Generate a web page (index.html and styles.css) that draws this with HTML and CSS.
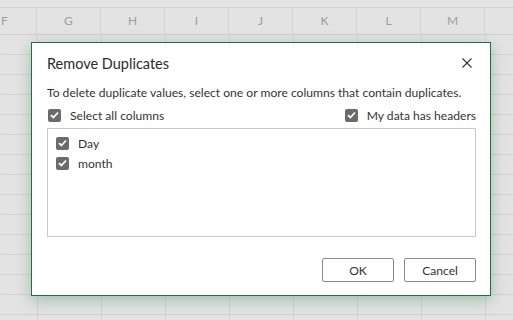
FILE: index.html
```html
<!DOCTYPE html>
<html>
<head>
<meta charset="utf-8">
<link rel="stylesheet" href="styles.css">
</head>
<body>
<div class="sheet">
  <div class="topbar"></div>
  <div class="colheads">
    <div class="col">F</div><div class="col">G</div><div class="col">H</div><div class="col">I</div><div class="col">J</div><div class="col">K</div><div class="col">L</div><div class="col">M</div><div class="col"></div>
  </div>
  <div class="rows"></div>
</div>
<div class="dialog">
  <div class="head">
    <div class="title">Remove Duplicates</div>
    <svg class="close" width="10" height="10" viewBox="0 0 10 10"><path d="M0.5 0.5 L9.5 9.5 M9.5 0.5 L0.5 9.5" stroke="#333" stroke-width="1.1" fill="none"/></svg>
  </div>
  <div class="desc">To delete duplicate values, select one or more columns that contain duplicates.</div>
  <div class="opts">
    <label class="cb"><span class="box"><svg width="9" height="8" viewBox="0 0 9 8"><path d="M1 4.2 L3.4 6.5 L8 1.5" stroke="#fff" stroke-width="1.8" fill="none"/></svg></span>Select all columns</label>
    <label class="cb"><span class="box"><svg width="9" height="8" viewBox="0 0 9 8"><path d="M1 4.2 L3.4 6.5 L8 1.5" stroke="#fff" stroke-width="1.8" fill="none"/></svg></span>My data has headers</label>
  </div>
  <div class="list">
    <label class="cb item"><span class="box"><svg width="9" height="8" viewBox="0 0 9 8"><path d="M1 4.2 L3.4 6.5 L8 1.5" stroke="#fff" stroke-width="1.8" fill="none"/></svg></span>Day</label>
    <label class="cb item"><span class="box"><svg width="9" height="8" viewBox="0 0 9 8"><path d="M1 4.2 L3.4 6.5 L8 1.5" stroke="#fff" stroke-width="1.8" fill="none"/></svg></span>month</label>
  </div>
  <div class="buttons">
    <button class="btn">OK</button>
    <button class="btn">Cancel</button>
  </div>
</div>
</body>
</html>
```

FILE: styles.css
```css
html, body {
  margin: 0;
  padding: 0;
  width: 513px;
  height: 320px;
  overflow: hidden;
  background: #e3e3e3;
  font-family: Lato, "Noto Sans", sans-serif;
}
.sheet {
  width: 513px;
  height: 320px;
  overflow: hidden;
}
.topbar {
  height: 8px;
  border-bottom: 1px solid #d4d4d4;
  box-sizing: border-box;
}
.colheads {
  display: flex;
  height: 27px;
  margin-left: -27px;
  border-bottom: 1px solid #cfcfcf;
  box-sizing: border-box;
}
.col {
  flex: 0 0 64px;
  box-sizing: border-box;
  border-right: 1px solid #d4d4d4;
  text-align: center;
  line-height: 26px;
  font-size: 12px;
  color: #9d9d9d;
}
.rows {
  height: 285px;
  background-image:
    repeating-linear-gradient(to right, transparent 0, transparent 63px, #d2d2d2 63px, #d2d2d2 64px),
    repeating-linear-gradient(to bottom, transparent 0, transparent 19px, #d2d2d2 19px, #d2d2d2 20px);
  background-position: -26px 0, 0 0;
}
.dialog {
  position: absolute;
  left: 31px;
  top: 42px;
  width: 460px;
  height: 254px;
  box-sizing: border-box;
  background: #fff;
  border: 1px solid #1e7145;
  box-shadow: 0 4px 14px rgba(40, 120, 70, 0.35);
  padding: 0 14px 0 15px;
  display: flex;
  flex-direction: column;
  color: #262626;
}
.head {
  display: flex;
  justify-content: space-between;
  align-items: center;
  height: 40px;
}
.title {
  font-size: 14.5px;
  color: #2b2b2b;
}
.close {
  margin-right: 4px;
}
.desc {
  font-size: 12.1px;
  color: #333;
  height: 20px;
  line-height: 20px;
  white-space: nowrap;
}
.opts {
  display: flex;
  justify-content: space-between;
  height: 24px;
  align-items: center;
  padding-left: 1px;
}
.cb {
  display: flex;
  align-items: center;
  font-size: 12.1px;
  color: #333;
}
.box {
  width: 13px;
  height: 13px;
  border-radius: 2px;
  background: #6b6b6b;
  display: flex;
  align-items: center;
  justify-content: center;
  margin-right: 9px;
}
.list {
  margin-top: 1px;
  height: 109px;
  box-sizing: border-box;
  border: 1px solid #c8c8c8;
  padding: 4px 0 0 8px;
}
.item {
  height: 20px;
}
.buttons {
  display: flex;
  justify-content: flex-end;
  gap: 10px;
  margin-top: 21px;
}
.btn {
  width: 72px;
  height: 24px;
  border: 1px solid #8a8a8a;
  border-radius: 2px;
  background: #fff;
  font-family: inherit;
  font-size: 12.1px;
  color: #333;
  padding: 0;
}
```
